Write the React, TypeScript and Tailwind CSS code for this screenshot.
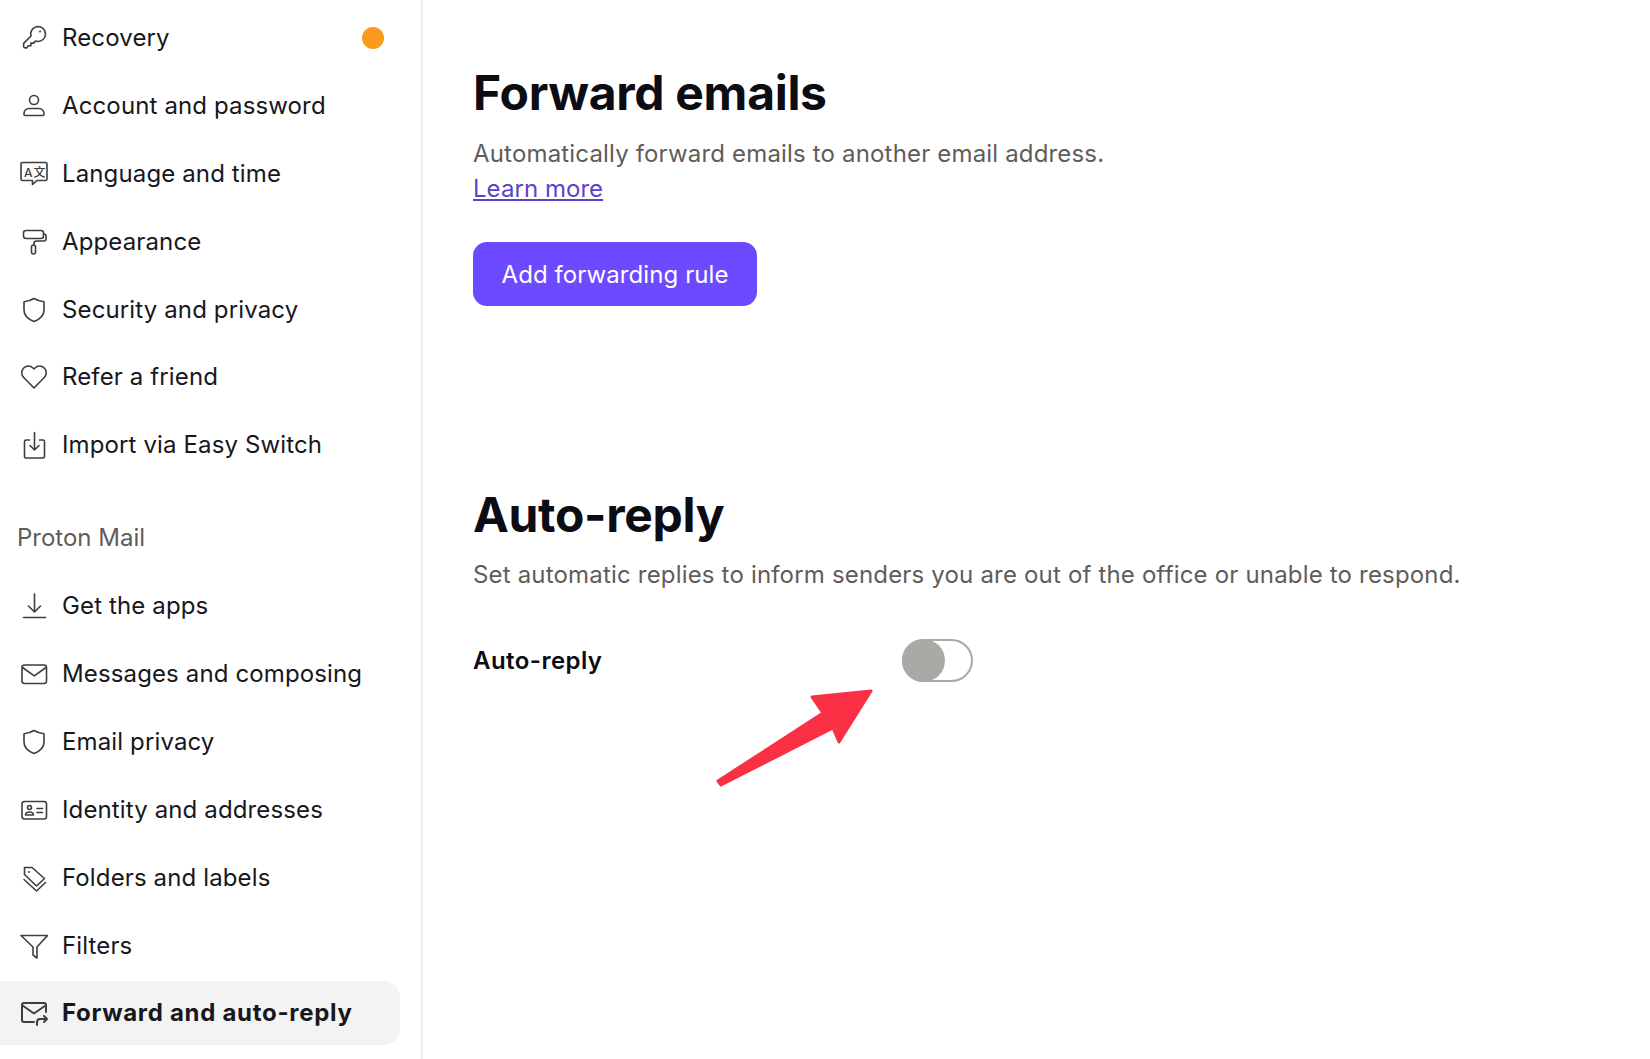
import type { ReactNode } from "react";

// Shared stroke wrapper: all sidebar icons sit on a 28px grid.
function Icon({ children, w = 1.6 }: { children: ReactNode; w?: number }) {
  return (
    <svg
      viewBox="0 0 28 28"
      fill="none"
      stroke="#3f3d42"
      strokeWidth={w}
      strokeLinecap="round"
      strokeLinejoin="round"
      className="h-[28px] w-[28px] shrink-0"
    >
      {children}
    </svg>
  );
}

const KeyIcon = () => (
  <Icon>
    <path d="M18 2.500a7.500 7.500 0 0 1 0 15c-.9 0-1.700-.1-2.500-.4l-2 2h-2.600v2.600H8.300L6.900 23.900H5.200a1.600 1.600 0 0 1-1.600-1.600v-2.200c0-.5.2-.9.5-1.200l6.900-6.900a7.500 7.500 0 0 1 7-9.500z" />
    <circle cx="20" cy="7.500" r="1" fill="#3f3d42" stroke="none" />
  </Icon>
);

const UserIcon = () => (
  <Icon>
    <circle cx="14" cy="8" r="4.500" />
    <path d="M9 16.500h10a5 5 0 0 1 5 5v1a1 1 0 0 1-1 1H5a1 1 0 0 1-1-1v-1a5 5 0 0 1 5-5z" />
  </Icon>
);

const LanguageIcon = () => (
  <Icon>
    <path d="M2.500 2.500h23a1.500 1.500 0 0 1 1.500 1.500v15a1.500 1.500 0 0 1-1.500 1.500H17l-4.500 4v-4h-10A1.500 1.500 0 0 1 1 19V4a1.500 1.500 0 0 1 1.500-1.500z" />
    <text x="4" y="16.500" fontSize="12" fontFamily="Inter, sans-serif" fontWeight="500" fill="#3f3d42" stroke="none">
      A
    </text>
    <text x="13.500" y="16.500" fontSize="12" fontFamily="'Noto Sans CJK SC', sans-serif" fontWeight="500" fill="#3f3d42" stroke="none">
      文
    </text>
  </Icon>
);

const RollerIcon = () => (
  <Icon>
    <rect x="3.500" y="2.500" width="20" height="8" rx="2.500" />
    <path d="M23.500 6h.500a2 2 0 0 1 2 2v3a2 2 0 0 1-2 2h-7.500a2.500 2.500 0 0 0-2.500 2.500V17" />
    <rect x="11.500" y="17" width="4" height="9" rx="2" />
  </Icon>
);

const ShieldIcon = () => (
  <Icon>
    <path d="M14 2.500c3 1.800 6.300 2.800 10 3.200v8.300c0 5.200-4 9.300-10 11.500C8 23.300 4 19.200 4 14V5.700c3.700-.4 7-1.400 10-3.200z" />
  </Icon>
);

const HeartIcon = () => (
  <Icon>
    <path d="M14 25 3.700 14.500a6.800 6.800 0 0 1 0-9.500 6.500 6.500 0 0 1 9.300 0l1 1 1-1a6.500 6.500 0 0 1 9.300 0 6.800 6.800 0 0 1 0 9.500z" />
  </Icon>
);

const ImportIcon = () => (
  <Icon>
    <path d="M9.500 9H6a1.500 1.500 0 0 0-1.500 1.500v15A1.500 1.500 0 0 0 6 27h17a1.500 1.500 0 0 0 1.500-1.500v-15A1.500 1.500 0 0 0 23 9h-3.500" />
    <path d="M14.500 1.500V19M10 14.500l4.500 4.500 4.500-4.500" />
  </Icon>
);

const DownloadIcon = () => (
  <Icon>
    <path d="M14.500 2v18M8.500 14l6 6 6-6M3.500 25.500h22" />
  </Icon>
);

const MailIcon = () => (
  <Icon>
    <rect x="2" y="5" width="24.500" height="18.500" rx="2.500" />
    <path d="m2.500 7.500 11.800 8.300L26 7.500" />
  </Icon>
);

const CardIcon = () => (
  <Icon>
    <rect x="2" y="5.500" width="24.500" height="17.500" rx="2.500" />
    <circle cx="9.500" cy="11.500" r="2" />
    <path d="M5.500 19c0-2 1.500-3 4-3s4 1 4 3zM17 12.500h5.500M17 16.500h5.500" />
  </Icon>
);

const TagIcon = () => (
  <Icon>
    <path d="M4.500 3.500h7.500l12.500 11-8 7.500-12-11.500z" />
    <circle cx="9" cy="8" r="1" fill="#3f3d42" stroke="none" />
    <path d="m4 15.500 12.500 11.500 9-8.500" />
  </Icon>
);

const FilterIcon = () => (
  <Icon>
    <path d="M1 3.500h26.500L17 15v11l-4-3V15z" />
  </Icon>
);

const ForwardIcon = () => (
  <Icon w={2}>
    <path d="M14 23H4a2 2 0 0 1-2-2V6a2 2 0 0 1 2-2h20a2 2 0 0 1 2 2v7" />
    <path d="m2.500 6.500 11.500 8 11.500-8" />
    <path d="M17 26v-3a3 3 0 0 1 3-3h7M24 17l3 3-3 3" />
  </Icon>
);

function NavItem({
  icon,
  label,
  active,
  dot,
}: {
  icon: ReactNode;
  label: string;
  active?: boolean;
  dot?: boolean;
}) {
  return (
    <div
      className={
        "flex h-[64px] items-center gap-[14px] rounded-r-[16px] pl-[20px] pr-[16px] text-[24px] text-[#17171c] " +
        (active ? "bg-[#f3f3f3] font-bold tracking-[0.7px]" : "tracking-[0.13px]")
      }
    >
      {icon}
      <span className="flex-1">{label}</span>
      {dot && <span className="h-[22px] w-[22px] rounded-full bg-[#fa9a1e]" />}
    </div>
  );
}

export default function App() {
  return (
    <div className="relative flex h-[1059px] w-[1650px] overflow-hidden bg-white font-['Inter',sans-serif] text-[#0c0c14]">
      <aside className="h-full w-[423px] shrink-0 border-r-2 border-[#ededed] pr-[21px] pt-[6px]">
        <nav className="flex flex-col gap-[3.900px]">
          <NavItem icon={<KeyIcon />} label="Recovery" dot />
          <NavItem icon={<UserIcon />} label="Account and password" />
          <NavItem icon={<LanguageIcon />} label="Language and time" />
          <NavItem icon={<RollerIcon />} label="Appearance" />
          <NavItem icon={<ShieldIcon />} label="Security and privacy" />
          <NavItem icon={<HeartIcon />} label="Refer a friend" />
          <NavItem icon={<ImportIcon />} label="Import via Easy Switch" />
          <div className="mt-[25px] flex h-[64px] items-center pl-[17px] text-[24px] text-[#5f5c5c]">
            Proton Mail
          </div>
          <NavItem icon={<DownloadIcon />} label="Get the apps" />
          <NavItem icon={<MailIcon />} label="Messages and composing" />
          <NavItem icon={<ShieldIcon />} label="Email privacy" />
          <NavItem icon={<CardIcon />} label="Identity and addresses" />
          <NavItem icon={<TagIcon />} label="Folders and labels" />
          <NavItem icon={<FilterIcon />} label="Filters" />
          <NavItem icon={<ForwardIcon />} label="Forward and auto-reply" active />
        </nav>
      </aside>

      <main className="flex-1 pl-[50px] pt-[65px]">
        <h1 className="text-[48px] font-bold leading-[56px] tracking-[-0.3px]">Forward emails</h1>
        <p className="mt-[15px] text-[24px] leading-[35px] tracking-[0.17px] text-[#5f5c5c]">
          Automatically forward emails to another email address.
          <br />
          <a className="tracking-[0.05px] text-[#5b43c9] underline">Learn more</a>
        </p>
        <button className="mt-[36px] flex h-[64px] w-[284px] items-center justify-center rounded-[14px] bg-[#6d4aff] pt-[1px] text-[24px] tracking-[0.08px] text-white">
          Add forwarding rule
        </button>

        <h2 className="mt-[181px] text-[48px] font-bold leading-[56px] tracking-[-0.3px]">Auto-reply</h2>
        <p className="mt-[14px] text-[24px] leading-[36px] tracking-[0.18px] text-[#5f5c5c]">
          Set automatic replies to inform senders you are out of the office or unable to respond.
        </p>
        <div className="mt-[46px] flex items-center">
          <span className="w-[429px] text-[24px] font-semibold tracking-[0.45px]">Auto-reply</span>
          <div className="flex h-[43px] w-[71px] rounded-full border-2 border-[#a9a9a5] bg-white">
            <span className="-m-[2px] h-[43px] w-[43px] rounded-full bg-[#a9a9a5]" />
          </div>
        </div>
      </main>

      {/* annotation arrow laid over the page */}
      <svg viewBox="0 0 190 110" className="absolute left-[700px] top-[680px] h-[110px] w-[190px]">
        <path
          d="M171 11 112 17 123 33 18 101 21 105 133 48 139 62z"
          fill="#fa3045"
          stroke="#fa3045"
          strokeWidth="3"
          strokeLinejoin="round"
        />
      </svg>
    </div>
  );
}
